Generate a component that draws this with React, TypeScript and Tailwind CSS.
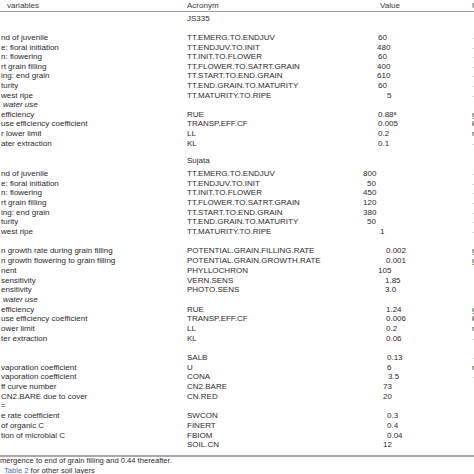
import React from 'react';

type R = {
  l?: string;
  it?: boolean;
  a?: string;
  v?: string;
  sup?: string;
  vp?: string;
  u?: string;
  dash?: boolean;
};

const phen = (vals: [string, string][], ripe: [string, string]): R[] => [
  { l: 'nd of juvenile', a: 'TT.EMERG.TO.ENDJUV', v: vals[0][0], vp: vals[0][1], dash: true },
  { l: 'e: floral initiation', a: 'TT.ENDJUV.TO.INIT', v: vals[1][0], vp: vals[1][1], dash: true },
  { l: 'n: flowering', a: 'TT.INIT.TO.FLOWER', v: vals[2][0], vp: vals[2][1], dash: true },
  { l: 'rt grain filling', a: 'TT.FLOWER.TO.SATRT.GRAIN', v: vals[3][0], vp: vals[3][1], dash: true },
  { l: 'ing: end grain', a: 'TT.START.TO.END.GRAIN', v: vals[4][0], vp: vals[4][1], dash: true },
  { l: 'turity', a: 'TT.END.GRAIN.TO.MATURITY', v: vals[5][0], vp: vals[5][1], dash: true },
  { l: 'west ripe', a: 'TT.MATURITY.TO.RIPE', v: ripe[0], vp: ripe[1], dash: true },
];

const js335: R[] = [
  ...phen(
    [
      ['60', 'pl-[18px]'],
      ['480', 'pl-[17px]'],
      ['60', 'pl-[18px]'],
      ['400', 'pl-[17px]'],
      ['610', 'pl-[17px]'],
      ['60', 'pl-[18px]'],
    ],
    ['5', 'pl-[27px]']
  ),
  { l: 'water use', it: true },
  { l: 'efficiency', a: 'RUE', v: '0.88', sup: 'a', vp: 'pl-[18px]', u: 'g MJ⁻¹' },
  { l: 'use efficiency coefficient', a: 'TRANSP.EFF.CF', v: '0.005', vp: 'pl-[18px]', u: 'kPa' },
  { l: 'r lower limit', a: 'LL', v: '0.2', vp: 'pl-[18px]', u: 'mm mm⁻¹' },
  { l: 'ater extraction', a: 'KL', v: '0.1', vp: 'pl-[18px]', dash: true },
];

const sujata: R[] = [
  ...phen(
    [
      ['800', 'pl-[3px]'],
      ['50', 'pl-[7px]'],
      ['450', 'pl-[3px]'],
      ['120', 'pl-[3px]'],
      ['380', 'pl-[3px]'],
      ['50', 'pl-[7px]'],
    ],
    ['1', 'pl-[20px]']
  ),
  {},
  { l: 'n growth rate during grain filling', a: 'POTENTIAL.GRAIN.FILLING.RATE', v: '0.002', vp: 'pl-[26px]', u: 'g grain⁻¹ d⁻¹' },
  { l: 'n growth flowering to grain filling', a: 'POTENTIAL.GRAIN.GROWTH.RATE', v: '0.001', vp: 'pl-[26px]', u: 'g grain⁻¹ d⁻¹' },
  { l: 'nent', a: 'PHYLLOCHRON', v: '105', vp: 'pl-[18px]' },
  { l: 'sensitivity', a: 'VERN.SENS', v: '1.85', vp: 'pl-[25px]' },
  { l: 'ensitivity', a: 'PHOTO.SENS', v: '3.0', vp: 'pl-[25px]' },
  { l: 'water use', it: true },
  { l: 'efficiency', a: 'RUE', v: '1.24', vp: 'pl-[26px]', u: 'g MJ⁻¹' },
  { l: 'use efficiency coefficient', a: 'TRANSP.EFF.CF', v: '0.006', vp: 'pl-[26px]', u: 'kPa' },
  { l: 'ower limit', a: 'LL', v: '0.2', vp: 'pl-[26px]', u: 'mm mm⁻¹' },
  { l: 'ter extraction', a: 'KL', v: '0.06', vp: 'pl-[26px]', dash: true },
  {},
  { a: 'SALB', v: '0.13', vp: 'pl-[27px]', dash: true },
  { l: 'vaporation coefficient', a: 'U', v: '6', vp: 'pl-[27px]', u: 'mm' },
  { l: 'vaporation coefficient', a: 'CONA', v: '3.5', vp: 'pl-[28px]', dash: true },
  { l: 'ff curve number', a: 'CN2.BARE', v: '73', vp: 'pl-[23px]' },
  { l: 'CN2.BARE due to cover', a: 'CN.RED', v: '20', vp: 'pl-[23px]' },
  { l: '=' },
  { l: 'e rate coefficient', a: 'SWCON', v: '0.3', vp: 'pl-[27px]' },
  { l: 'of organic C', a: 'FINERT', v: '0.4', vp: 'pl-[27px]' },
  { l: 'tion of microbial C', a: 'FBIOM', v: '0.04', vp: 'pl-[27px]' },
  { a: 'SOIL.CN', v: '12', vp: 'pl-[23px]' },
];

function Row({ r, h }: { r: R; h: string }) {
  return (
    <div className={`flex items-center leading-none ${h}`}>
      <div className={`w-[187px] shrink-0 overflow-hidden whitespace-nowrap ${r.it ? 'italic pl-[3px]' : 'pl-[1px]'}`}>
        {r.l}
      </div>
      <div className="w-[173px] shrink-0 whitespace-nowrap">{r.a}</div>
      <div className={`w-[110px] shrink-0 whitespace-nowrap ${r.vp ?? ''}`}>
        {r.v}
        {r.sup && <span className="relative -top-[2px] text-[5px]">{r.sup}</span>}
      </div>
      <div className="shrink-0 whitespace-nowrap pl-[2px]">
        {r.dash ? <span className="text-[#bdbdbd]">–</span> : r.u}
      </div>
    </div>
  );
}

export default function App() {
  return (
    <div
      className="w-[474px] h-[474px] overflow-hidden bg-white text-[8px] text-[#2b2b2b]"
      style={{ fontFamily: '"Liberation Sans", Arial, sans-serif' }}
    >
      <div className="flex h-[12px] items-center border-b border-[#a0a0a0] leading-none text-[#3a3a3a]">
        <div className="w-[187px] shrink-0 pl-[7px]">variables</div>
        <div className="w-[173px] shrink-0">Acronym</div>
        <div className="w-[110px] shrink-0 pl-[20px]">Value</div>
        <div className="shrink-0 pl-[2px] whitespace-nowrap">Unit</div>
      </div>
      <div className="flex h-[13px] items-center leading-none">
        <div className="w-[187px] shrink-0" />
        <div>JS335</div>
      </div>
      <div className="h-[8.2px]" />
      {js335.map((r, i) => (
        <Row key={i} r={r} h="h-[9.6px]" />
      ))}
      <div className="h-[6.6px]" />
      <div className="flex h-[12px] items-center leading-none">
        <div className="w-[187px] shrink-0" />
        <div>Sujata</div>
      </div>
      <div className="h-[2.2px]" />
      {sujata.map((r, i) => (
        <Row key={i} r={r} h="h-[9.7px]" />
      ))}
      <div className="mt-[4.5px] border-t-2 border-[#a8a8a8]" />
      <div className="flex h-[9.5px] items-center whitespace-nowrap text-[7.6px] leading-none">
        mergence to end of grain filling and 0.44 thereafter.
      </div>
      <div className="flex h-[9.5px] items-center whitespace-nowrap pl-[4px] text-[7.6px] leading-none">
        <span className="text-[#3d6fb4]">Table 2</span>&nbsp;for other soil layers
      </div>
    </div>
  );
}
